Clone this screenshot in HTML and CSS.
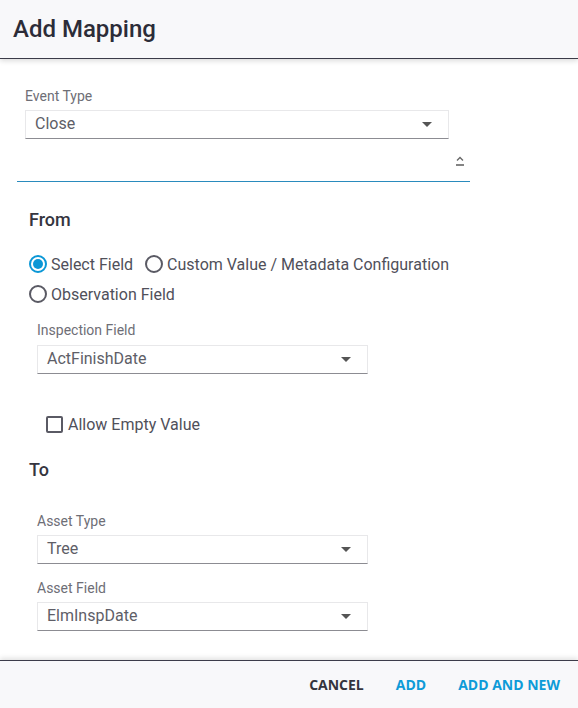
FILE: index.html
```html
<!DOCTYPE html>
<html>
<head>
<meta charset="utf-8">
<link rel="stylesheet" href="styles.css">
</head>
<body>
<div class="dialog">
  <header class="header"><h1 class="title">Add Mapping</h1></header>
  <main class="content">
    <div class="field event-field">
      <div class="label">Event Type</div>
      <div class="select wide"><span class="value">Close</span><span class="caret"></span></div>
    </div>
    <div class="expander">
      <svg class="collapse-icon" width="12" height="12" viewBox="0 0 12 12"><polyline points="3,5.5 6,2.5 9,5.5" fill="none" stroke="#666" stroke-width="1.3"/><line x1="2" y1="10" x2="10" y2="10" stroke="#666" stroke-width="1.6"/></svg>
    </div>
    <h2 class="section from">From</h2>
    <div class="radios">
      <div class="radio-row">
        <label class="radio checked"><span class="dot"></span>Select Field</label>
        <label class="radio"><span class="dot"></span>Custom Value / Metadata Configuration</label>
      </div>
      <div class="radio-row">
        <label class="radio"><span class="dot"></span>Observation Field</label>
      </div>
    </div>
    <div class="field sub-field first">
      <div class="label">Inspection Field</div>
      <div class="select narrow"><span class="value">ActFinishDate</span><span class="caret"></span></div>
    </div>
    <label class="checkbox"><span class="box"></span>Allow Empty Value</label>
    <h2 class="section to">To</h2>
    <div class="field sub-field asset-type">
      <div class="label">Asset Type</div>
      <div class="select narrow"><span class="value">Tree</span><span class="caret"></span></div>
    </div>
    <div class="field sub-field asset-field">
      <div class="label">Asset Field</div>
      <div class="select narrow"><span class="value">ElmInspDate</span><span class="caret"></span></div>
    </div>
  </main>
  <footer class="footer">
    <button class="btn cancel">CANCEL</button>
    <button class="btn primary">ADD</button>
    <button class="btn primary">ADD AND NEW</button>
  </footer>
</div>
</body>
</html>
```

FILE: styles.css
```css
* { box-sizing: border-box; }
html, body { margin: 0; padding: 0; }
body {
  font-family: Roboto, "Noto Sans", sans-serif;
  background: #fff;
  width: 578px;
  height: 708px;
  overflow: hidden;
}
.dialog {
  display: flex;
  flex-direction: column;
  height: 708px;
}
.header {
  height: 59px;
  background: #f8f8fa;
  border-bottom: 1px solid #3b3b48;
  box-shadow: 0 2px 5px rgba(0,0,0,0.14);
  display: flex;
  align-items: center;
  padding-left: 13px;
  flex: none;
  position: relative;
  z-index: 1;
}
.title {
  margin: 0;
  font-size: 24px;
  font-weight: 500;
  color: #2c2c38;
  line-height: 28px;
}
.content {
  flex: 1;
  padding: 0;
}
.field { display: flex; flex-direction: column; }
.label {
  font-size: 14px;
  line-height: 16px;
  color: #6e6e76;
  margin-bottom: 6px;
}
.select {
  height: 29px;
  border: 1px solid #e8e8ea;
  border-bottom: 1px solid #8c8c92;
  display: flex;
  align-items: center;
  justify-content: space-between;
  padding: 0 16px 0 9px;
}
.value {
  font-size: 16px;
  color: #5e5e67;
  position: relative;
  top: -1px;
}
.caret {
  width: 0; height: 0;
  border-left: 5px solid transparent;
  border-right: 5px solid transparent;
  border-top: 5px solid #555;
}
.event-field { margin: 29px 0 0 25px; width: 424px; }
.wide { width: 424px; }
.narrow { width: 331px; }
.expander {
  margin: 0 0 0 17px;
  width: 453px;
  height: 43px;
  border-bottom: 1px solid #2a8bbd;
  display: flex;
  justify-content: flex-end;
  align-items: flex-end;
  padding: 0 4px 14px 0;
}
.collapse-icon { display: block; }
.section {
  margin: 0;
  font-size: 18px;
  font-weight: 500;
  line-height: 22px;
  color: #35353f;
  padding-left: 29px;
}
.from { margin-top: 27px; }
.radios {
  margin-top: 18px;
  padding-left: 29px;
}
.radio-row {
  display: flex;
  gap: 12px;
  height: 30px;
  align-items: center;
}
.radio {
  display: flex;
  align-items: center;
  font-size: 16px;
  color: #50505a;
}
.dot {
  width: 18px; height: 18px;
  border: 2px solid #5a5a64;
  border-radius: 50%;
  margin-right: 4px;
  display: flex;
  align-items: center;
  justify-content: center;
}
.radio.checked .dot { border-color: #0b97d6; }
.radio.checked .dot::after {
  content: "";
  width: 10px; height: 10px;
  border-radius: 50%;
  background: #0b97d6;
}
.sub-field { padding-left: 37px; }
.sub-field .label { margin-bottom: 7px; }
.first { margin-top: 13px; }
.checkbox {
  display: flex;
  align-items: center;
  margin: 40px 0 0 46px;
  height: 20px;
  font-size: 16px;
  color: #50505a;
}
.box {
  width: 17px; height: 17px;
  border: 2px solid #5a5a64;
  border-radius: 2px;
  margin-right: 5px;
}
.to { margin-top: 25px; }
.asset-type { margin-top: 32px; }
.asset-type .label, .asset-field .label { margin-bottom: 6px; }
.asset-field { margin-top: 16px; }
.footer {
  flex: none;
  height: 48px;
  background: #f8f8fa;
  border-top: 1px solid #3c3c4a;
  box-shadow: 0 -2px 5px rgba(0,0,0,0.12);
  display: flex;
  justify-content: flex-end;
  align-items: center;
  padding-right: 2px;
}
.btn {
  background: none;
  border: none;
  font-family: "Open Sans", sans-serif;
  font-weight: 700;
  font-size: 14px;
  padding: 0 16px;
  height: 36px;
  cursor: pointer;
}
.cancel { color: #34343e; }
.primary { color: #0e9bd8; }
```
